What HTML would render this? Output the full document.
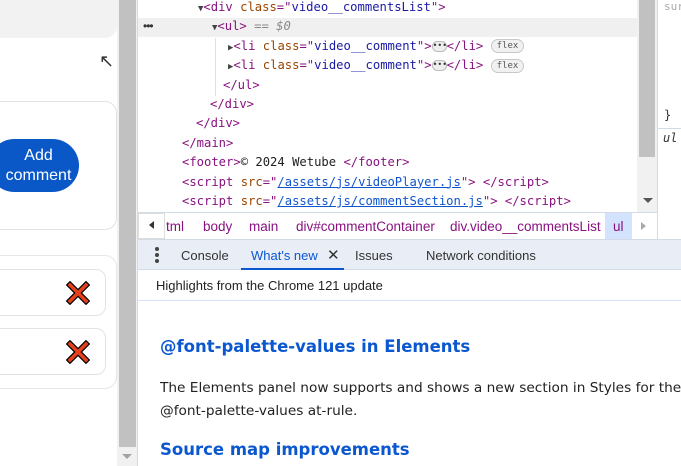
<!DOCTYPE html>
<html><head><meta charset="utf-8"><style>
*{margin:0;padding:0;box-sizing:border-box}
body{width:681px;height:466px;overflow:hidden;background:#fff;position:relative;font-family:"Liberation Sans",sans-serif}
.a{position:absolute}
.code{font-family:"DejaVu Sans Mono","Liberation Mono",monospace;font-size:12.2px;color:#881280;width:500px;height:214px;overflow:hidden}
.code div{height:19.4px;line-height:19.4px;white-space:pre}
.t{color:#881280}.an{color:#994500}.av{color:#1a1aa6}.lk{text-decoration:underline;color:#1155cc}
.ui{font-family:"Liberation Sans","DejaVu Sans",sans-serif;font-size:13px;color:#333}
.pill{display:inline-block;border:1px solid #c8c8c8;border-radius:8px;background:#f1f1f1;font-size:9px;color:#555;padding:0 5px;line-height:12px;vertical-align:middle}
.dots{display:inline-block;border:1px solid #bbb;border-radius:6px;background:#eee;width:15px;height:11px;font-size:8px;line-height:8px;text-align:center;color:#333;vertical-align:middle}
.bc{position:absolute;top:219px;font-family:"Liberation Sans",sans-serif;font-size:13.5px;color:#881280;white-space:nowrap}
</style></head><body>
<div class="a" style="left:-20px;top:-20px;width:137px;height:58px;background:#f2f2f2;border-radius:0 0 12px 0"></div>
<div class="a" style="left:99px;top:51px;font-size:18px;color:#333">&#8598;</div>
<div class="a" style="left:-20px;top:101px;width:137px;height:129px;border:1px solid #e3e3e3;border-radius:12px"></div>
<div class="a" style="left:-12px;top:139px;width:91px;height:53px;background:#0a57c7;border-radius:27px;color:#fff;font-size:16px;text-align:center;line-height:20px;padding-top:7px;padding-left:10px">Add<br>comment</div>
<div class="a" style="left:-20px;top:255px;width:137px;height:134px;border:1px solid #e6e6e6;border-radius:12px"></div>
<div class="a" style="left:-20px;top:269px;width:126px;height:47px;border:1px solid #e3e3e3;border-radius:10px"></div>
<div class="a" style="left:-20px;top:328px;width:126px;height:47px;border:1px solid #e3e3e3;border-radius:10px"></div>
<svg class="a" style="left:66px;top:281px" width="24" height="24" viewBox="0 0 24 24"><path d="M4 4L20 20M20 4L4 20" stroke="#000" stroke-width="6" stroke-linecap="square"/><path d="M4 4L20 20M20 4L4 20" stroke="#e8401c" stroke-width="3.5" stroke-linecap="square"/></svg>
<svg class="a" style="left:66px;top:340px" width="24" height="24" viewBox="0 0 24 24"><path d="M4 4L20 20M20 4L4 20" stroke="#000" stroke-width="6" stroke-linecap="square"/><path d="M4 4L20 20M20 4L4 20" stroke="#e8401c" stroke-width="3.5" stroke-linecap="square"/></svg>
<div class="a" style="left:117px;top:0;width:20px;height:466px;background:#f1f1f1"></div>
<div class="a" style="left:119px;top:0;width:17px;height:447px;background:#c1c1c1"></div>
<div class="a" style="left:122px;top:454px;width:0;height:0;border-left:5px solid transparent;border-right:5px solid transparent;border-top:5px solid #a3a3a3"></div>
<div class="a" style="left:137px;top:0;width:1px;height:466px;background:#d3dbe8"></div>
<div class="a" style="left:138px;top:18px;width:500px;height:19px;background:#f0f0f0"></div>
<div class="a" style="left:143px;top:19px;font-size:12px;color:#333;letter-spacing:-1px">•••</div>
<div class="a" style="left:215px;top:38px;width:1px;height:58px;background:#dde"></div>
<div class="a code" style="left:138px;top:-2px">
<div style="padding-left:60px"><span style="color:#444;font-size:9px">▼</span><span class="t">&lt;div </span><span class="an">class</span><span class="t">="</span><span class="av">video__commentsList</span><span class="t">"&gt;</span></div>
<div style="padding-left:74px"><span style="color:#444;font-size:9px">▼</span><span class="t">&lt;ul&gt;</span> <span style="color:#888;font-style:italic">== $0</span></div>
<div style="padding-left:90px"><span style="color:#444;font-size:9px">▶</span><span class="t">&lt;li </span><span class="an">class</span><span class="t">="</span><span class="av">video__comment</span><span class="t">"&gt;</span><span class="dots">•••</span><span class="t">&lt;/li&gt;</span> <span class="pill">flex</span></div>
<div style="padding-left:90px"><span style="color:#444;font-size:9px">▶</span><span class="t">&lt;li </span><span class="an">class</span><span class="t">="</span><span class="av">video__comment</span><span class="t">"&gt;</span><span class="dots">•••</span><span class="t">&lt;/li&gt;</span> <span class="pill">flex</span></div>
<div style="padding-left:85px">&lt;/ul&gt;</div>
<div style="padding-left:72px">&lt;/div&gt;</div>
<div style="padding-left:58px">&lt;/div&gt;</div>
<div style="padding-left:44px">&lt;/main&gt;</div>
<div style="padding-left:44px">&lt;footer&gt;<span style="color:#222">© 2024 Wetube </span>&lt;/footer&gt;</div>
<div style="padding-left:44px">&lt;script <span class="an">src</span>="<span class="lk">/assets/js/videoPlayer.js</span>"&gt; &lt;/script&gt;</div>
<div style="padding-left:44px">&lt;script <span class="an">src</span>="<span class="lk">/assets/js/commentSection.js</span>"&gt; &lt;/script&gt;</div>
</div>
<div class="a" style="left:637px;top:0;width:20px;height:212px;background:#f1f1f1"></div>
<div class="a" style="left:639px;top:0;width:16px;height:157px;background:#c1c1c1"></div>
<div class="a" style="left:643px;top:198px;width:0;height:0;border-left:5px solid transparent;border-right:5px solid transparent;border-top:5px solid #555"></div>
<div class="a" style="left:657px;top:0;width:1px;height:240px;background:#d3dbe8"></div>
<div class="a" style="left:664px;top:0;font-family:'DejaVu Sans Mono',monospace;font-size:11px;color:#aaa">sur</div>
<div class="a" style="left:664px;top:108px;font-family:'DejaVu Sans Mono',monospace;font-size:12px;color:#333">}</div>
<div class="a" style="left:658px;top:128px;width:23px;height:1px;background:#d3dbe8"></div>
<div class="a" style="left:663px;top:131px;font-family:'DejaVu Sans Mono',monospace;font-size:12px;font-style:italic;color:#333">ul</div>
<div class="a" style="left:138px;top:212px;width:519px;height:28px;background:#fff;border-top:1px solid #d3dbe8"></div>
<div class="a" style="left:138px;top:213px;width:27px;height:26px;border:1px solid #ddd;background:#fff"></div>
<div class="a" style="left:149px;top:221px;width:0;height:0;border-top:4px solid transparent;border-bottom:4px solid transparent;border-right:5px solid #333"></div>
<div class="bc" style="left:166px">tml</div>
<div class="bc" style="left:203px">body</div>
<div class="bc" style="left:249px">main</div>
<div class="bc" style="left:296px">div#commentContainer</div>
<div class="bc" style="left:450px">div.video__commentsList</div>
<div class="a" style="left:605px;top:213px;width:27px;height:26px;background:#d3e3fd"></div>
<div class="bc" style="left:613px">ul</div>
<div class="a" style="left:641px;top:222px;width:0;height:0;border-top:4px solid transparent;border-bottom:4px solid transparent;border-left:5px solid #aaa"></div>
<div class="a" style="left:138px;top:239px;width:543px;height:31px;background:#e9eef6;border-top:1px solid #d3dbe8;border-bottom:1px solid #d3dbe8"></div>
<div class="a" style="left:155px;top:247px;width:4px;height:4px;border-radius:2px;background:#444;box-shadow:0 6px 0 #444,0 12px 0 #444"></div>
<div class="a ui" style="left:181px;top:248px;color:#333">Console</div>
<div class="a ui" style="left:251px;top:248px;color:#0b57d0">What's new</div>
<div class="a ui" style="left:327px;top:246px;font-size:15px;color:#333">✕</div>
<div class="a" style="left:241px;top:268px;width:103px;height:2px;background:#0b57d0"></div>
<div class="a ui" style="left:355px;top:248px">Issues</div>
<div class="a ui" style="left:426px;top:248px">Network conditions</div>
<div class="a ui" style="left:156px;top:278px;color:#222">Highlights from the Chrome 121 update</div>
<div class="a" style="left:138px;top:300px;width:543px;height:1px;background:#d3e3fd"></div>
<div class="a" style="left:160px;top:337px;font-family:'DejaVu Sans',sans-serif;font-weight:bold;font-size:16.5px;color:#0b57d0;white-space:nowrap">@font-palette-values in Elements</div>
<div class="a" style="left:160px;top:377px;font-family:'DejaVu Sans',sans-serif;font-size:13.7px;color:#222;line-height:23px;white-space:nowrap">The Elements panel now supports and shows a new section in Styles for the<br>@font-palette-values at-rule.</div>
<div class="a" style="left:160px;top:440px;font-family:'DejaVu Sans',sans-serif;font-weight:bold;font-size:16.5px;color:#0b57d0;white-space:nowrap">Source map improvements</div>
</body></html>
